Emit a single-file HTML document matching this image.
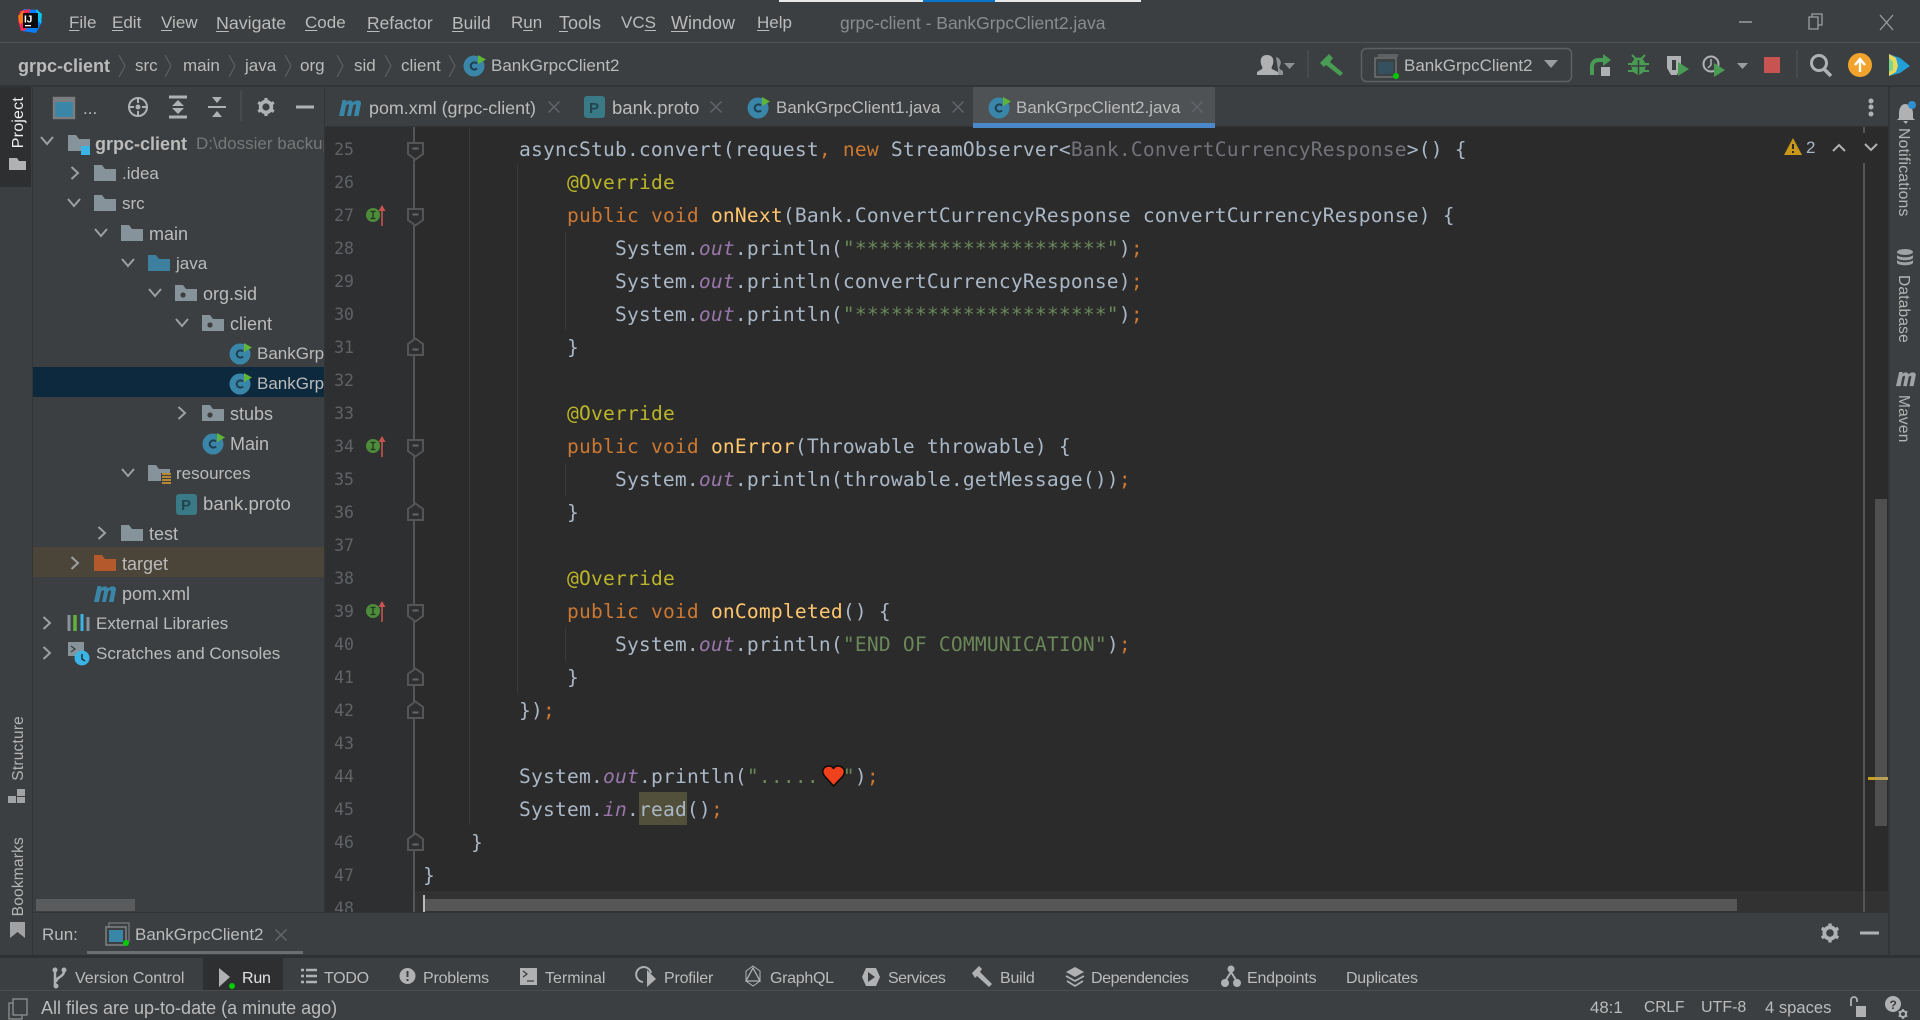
<!DOCTYPE html>
<html><head><meta charset="utf-8"><title>grpc-client - BankGrpcClient2.java</title>
<style>
html,body{margin:0;padding:0;background:#3c3f41;width:1920px;height:1020px;overflow:hidden}
body{position:relative;font-family:"Liberation Sans",sans-serif;color:#bbb}
.r{position:absolute}
.t{position:absolute;white-space:nowrap;font-size:17px;line-height:20px;height:20px;color:#bbb}
.s{font-size:16px}
.vl{position:absolute;writing-mode:vertical-rl;white-space:nowrap;font-size:15.5px;line-height:18px;color:#b4b4b4;letter-spacing:.2px}
.vr{transform:rotate(180deg)}
u{text-underline-offset:2px}
#code{position:absolute;left:325px;top:127px;width:1563px;height:785px;overflow:hidden}
.l{position:absolute;left:98px;white-space:pre;font-family:"DejaVu Sans Mono","Liberation Mono",monospace;font-size:19.6px;line-height:33px;height:33px;color:#a9b7c6;letter-spacing:.2px}
.n{position:absolute;left:0;width:29px;text-align:right;font-family:"DejaVu Sans Mono",monospace;font-size:16.5px;line-height:33px;color:#606366}
.k{color:#cc7832}.m{color:#ffc66d}.a{color:#bbb529}.q{color:#6a8759}.f{color:#9876aa;font-style:italic}.d{color:#72737a}
#tree{position:absolute;left:33px;top:127px;width:291px;height:700px;overflow:hidden}
#tree .t{margin-left:-33px;margin-top:-127px}
svg{position:absolute;left:0;top:0}
</style></head><body>

<!-- backgrounds -->
<div class="r" style="left:779px;top:0;width:362px;height:2px;background:#e8e8e8"></div>
<div class="r" style="left:923px;top:0;width:72px;height:2px;background:#0a74c9"></div>
<div class="r" style="left:0;top:42px;width:1920px;height:1px;background:#515456"></div>
<div class="r" style="left:0;top:85px;width:1920px;height:2px;background:#323435"></div>
<div class="r" style="left:0;top:87px;width:31px;height:100px;background:#2d2f30"></div>
<div class="r" style="left:32px;top:87px;width:1px;height:868px;background:#323435"></div>
<div class="r" style="left:324px;top:87px;width:1px;height:826px;background:#323435"></div>
<div class="r" style="left:1888px;top:87px;width:2px;height:868px;background:#323435"></div>
<div class="r" style="left:325px;top:126px;width:1563px;height:786px;background:#2b2b2b"></div>
<div class="r" style="left:325px;top:126px;width:89px;height:786px;background:#2e2f31"></div>
<div class="r" style="left:325px;top:126px;width:1563px;height:1px;background:#323435"></div>
<div class="r" style="left:973px;top:87px;width:242px;height:39px;background:#4e5254"></div>
<div class="r" style="left:973px;top:123px;width:242px;height:5px;background:#4a88c7"></div>
<div class="r" style="left:33px;top:367px;width:291px;height:30px;background:#0d293e"></div>
<div class="r" style="left:33px;top:547px;width:291px;height:30px;background:#4b4539"></div>
<div class="r" style="left:36px;top:899px;width:99px;height:12px;background:#595b5d"></div>
<div class="r" style="left:414px;top:891px;width:1474px;height:21px;background:#323232"></div>
<div class="r" style="left:33px;top:912px;width:1855px;height:1px;background:#323435"></div>
<div class="r" style="left:87px;top:951px;width:216px;height:3px;background:#6b6f72"></div>
<div class="r" style="left:0;top:955px;width:1920px;height:3px;background:#2f3132"></div>
<div class="r" style="left:203px;top:958px;width:80px;height:32px;background:#2d2f30"></div>
<div class="r" style="left:0;top:990px;width:1920px;height:1px;background:#4a4c4e"></div>
<!-- guides -->
<div class="r" style="left:469px;top:128px;width:1px;height:697px;background:#3b3b3b"></div>
<div class="r" style="left:517px;top:165px;width:1px;height:528px;background:#3b3b3b"></div>
<div class="r" style="left:565px;top:232px;width:1px;height:98px;background:#3b3b3b"></div>
<div class="r" style="left:565px;top:463px;width:1px;height:33px;background:#3b3b3b"></div>
<div class="r" style="left:565px;top:628px;width:1px;height:33px;background:#3b3b3b"></div>
<div class="r" style="left:1863px;top:127px;width:2px;height:6px;background:#555"></div>
<div class="r" style="left:1863px;top:163px;width:2px;height:749px;background:#555"></div>
<div class="r" style="left:639px;top:792px;width:48px;height:33px;background:#52503a"></div>

<!-- menu -->
<div class="t" style="left:69px;top:13px"><u>F</u>ile</div>
<div class="t" style="left:112px;top:13px"><u>E</u>dit</div>
<div class="t" style="left:161px;top:13px"><u>V</u>iew</div>
<div class="t" style="left:216px;top:13px;font-size:17.8px"><u>N</u>avigate</div>
<div class="t" style="left:305px;top:13px"><u>C</u>ode</div>
<div class="t" style="left:367px;top:13px;font-size:17.4px"><u>R</u>efactor</div>
<div class="t" style="left:452px;top:13px;font-size:17.4px"><u>B</u>uild</div>
<div class="t" style="left:511px;top:13px">R<u>u</u>n</div>
<div class="t" style="left:559px;top:13px;font-size:18px"><u>T</u>ools</div>
<div class="t" style="left:621px;top:13px">VC<u>S</u></div>
<div class="t" style="left:671px;top:13px;font-size:18px"><u>W</u>indow</div>
<div class="t" style="left:757px;top:13px"><u>H</u>elp</div>
<div class="t" style="left:840px;top:13px;color:#8a8c8e;font-size:17.5px">grpc-client - BankGrpcClient2.java</div>

<!-- breadcrumb -->
<div class="t" style="left:18px;top:56px;font-weight:bold;font-size:18px">grpc-client</div>
<div class="t" style="left:135px;top:56px">src</div>
<div class="t" style="left:183px;top:56px">main</div>
<div class="t" style="left:245px;top:56px">java</div>
<div class="t" style="left:300px;top:56px">org</div>
<div class="t" style="left:354px;top:56px">sid</div>
<div class="t" style="left:401px;top:56px">client</div>
<div class="t" style="left:491px;top:56px">BankGrpcClient2</div>
<div class="t" style="left:1404px;top:56px">BankGrpcClient2</div>

<!-- tabs -->
<div class="t" style="left:83px;top:99px">...</div>
<div class="t" style="left:369px;top:98px;font-size:17.9px">pom.xml (grpc-client)</div>
<div class="t" style="left:612px;top:98px;font-size:18.5px">bank.proto</div>
<div class="t" style="left:776px;top:98px">BankGrpcClient1.java</div>
<div class="t" style="left:1016px;top:98px">BankGrpcClient2.java</div>

<!-- tree -->
<div id="tree">
<div class="t" style="left:95px;top:134px;font-weight:bold;font-size:18px">grpc-client</div>
<div class="t" style="left:196px;top:134px;color:#777">D:\dossier backup\grpc</div>
<div class="t" style="left:122px;top:164px">.idea</div>
<div class="t" style="left:122px;top:194px">src</div>
<div class="t" style="left:149px;top:224px;font-size:18px">main</div>
<div class="t" style="left:176px;top:254px">java</div>
<div class="t" style="left:203px;top:284px;font-size:18px">org.sid</div>
<div class="t" style="left:230px;top:314px;font-size:18px">client</div>
<div class="t" style="left:257px;top:344px">BankGrpcClient1</div>
<div class="t" style="left:257px;top:374px">BankGrpcClient2</div>
<div class="t" style="left:230px;top:404px;font-size:18px">stubs</div>
<div class="t" style="left:230px;top:434px;font-size:18px">Main</div>
<div class="t" style="left:176px;top:464px">resources</div>
<div class="t" style="left:203px;top:494px;font-size:18.6px">bank.proto</div>
<div class="t" style="left:149px;top:524px;font-size:18px">test</div>
<div class="t" style="left:122px;top:554px;font-size:18px">target</div>
<div class="t" style="left:122px;top:584px;font-size:18px">pom.xml</div>
<div class="t" style="left:96px;top:614px">External Libraries</div>
<div class="t" style="left:96px;top:644px">Scratches and Consoles</div>
</div>

<!-- code -->
<div id="code">
<div class="n" style="top:6px">25</div><div class="n" style="top:39px">26</div><div class="n" style="top:72px">27</div><div class="n" style="top:105px">28</div><div class="n" style="top:138px">29</div><div class="n" style="top:171px">30</div><div class="n" style="top:204px">31</div><div class="n" style="top:237px">32</div><div class="n" style="top:270px">33</div><div class="n" style="top:303px">34</div><div class="n" style="top:336px">35</div><div class="n" style="top:369px">36</div><div class="n" style="top:402px">37</div><div class="n" style="top:435px">38</div><div class="n" style="top:468px">39</div><div class="n" style="top:501px">40</div><div class="n" style="top:534px">41</div><div class="n" style="top:567px">42</div><div class="n" style="top:600px">43</div><div class="n" style="top:633px">44</div><div class="n" style="top:666px">45</div><div class="n" style="top:699px">46</div><div class="n" style="top:732px">47</div><div class="n" style="top:765px">48</div>
<div class="l" style="top:6px">        asyncStub.convert(request<span class="k">,</span> <span class="k">new</span> StreamObserver&lt;<span class="d">Bank.ConvertCurrencyResponse</span>&gt;() {</div>
<div class="l" style="top:39px">            <span class="a">@Override</span></div>
<div class="l" style="top:72px">            <span class="k">public void</span> <span class="m">onNext</span>(Bank.ConvertCurrencyResponse convertCurrencyResponse) {</div>
<div class="l" style="top:105px">                System.<span class="f">out</span>.println(<span class="q">"*********************"</span>)<span class="k">;</span></div>
<div class="l" style="top:138px">                System.<span class="f">out</span>.println(convertCurrencyResponse)<span class="k">;</span></div>
<div class="l" style="top:171px">                System.<span class="f">out</span>.println(<span class="q">"*********************"</span>)<span class="k">;</span></div>
<div class="l" style="top:204px">            }</div>
<div class="l" style="top:270px">            <span class="a">@Override</span></div>
<div class="l" style="top:303px">            <span class="k">public void</span> <span class="m">onError</span>(Throwable throwable) {</div>
<div class="l" style="top:336px">                System.<span class="f">out</span>.println(throwable.getMessage())<span class="k">;</span></div>
<div class="l" style="top:369px">            }</div>
<div class="l" style="top:435px">            <span class="a">@Override</span></div>
<div class="l" style="top:468px">            <span class="k">public void</span> <span class="m">onCompleted</span>() {</div>
<div class="l" style="top:501px">                System.<span class="f">out</span>.println(<span class="q">"END OF COMMUNICATION"</span>)<span class="k">;</span></div>
<div class="l" style="top:534px">            }</div>
<div class="l" style="top:567px">        })<span class="k">;</span></div>
<div class="l" style="top:633px">        System.<span class="f">out</span>.println(<span class="q">"..... &nbsp;"</span>)<span class="k">;</span></div>
<div class="l" style="top:666px">        System.<span class="f">in</span>.read()<span class="k">;</span></div>
<div class="l" style="top:699px">    }</div>
<div class="l" style="top:732px">}</div>
</div>

<!-- editor scrollbars -->
<div class="r" style="left:424px;top:899px;width:1313px;height:12px;background:#565656"></div>
<div class="r" style="left:423px;top:895px;width:2px;height:17px;background:#bbb"></div>
<div class="r" style="left:1875px;top:499px;width:12px;height:327px;background:#4f4f4f"></div>
<div class="r" style="left:1868px;top:777px;width:7px;height:3px;background:#c9a020"></div>
<div class="r" style="left:1875px;top:777px;width:13px;height:3px;background:#b8a055"></div>

<div class="t" style="left:1806px;top:138px;color:#a9b7c6">2</div>

<!-- run bar -->
<div class="t" style="left:42px;top:925px">Run:</div>
<div class="t" style="left:135px;top:925px">BankGrpcClient2</div>

<!-- bottom tool bar -->
<div class="t s" style="left:75px;top:969px">Version Control</div>
<div class="t s" style="left:242px;top:969px;color:#e4e4e4;letter-spacing:-.2px">Run</div>
<div class="t s" style="left:324px;top:969px;letter-spacing:-.3px">TODO</div>
<div class="t s" style="left:423px;top:969px;letter-spacing:-.2px">Problems</div>
<div class="t s" style="left:545px;top:969px">Terminal</div>
<div class="t s" style="left:664px;top:969px;letter-spacing:-.2px">Profiler</div>
<div class="t s" style="left:770px;top:969px;letter-spacing:-.3px">GraphQL</div>
<div class="t s" style="left:888px;top:969px;letter-spacing:-.5px">Services</div>
<div class="t s" style="left:1000px;top:969px;letter-spacing:-.2px">Build</div>
<div class="t s" style="left:1091px;top:969px;letter-spacing:-.4px">Dependencies</div>
<div class="t s" style="left:1247px;top:969px;letter-spacing:-.2px">Endpoints</div>
<div class="t s" style="left:1346px;top:969px;letter-spacing:-.3px">Duplicates</div>

<!-- status -->
<div class="t s" style="left:41px;top:998px;font-size:18px">All files are up-to-date (a minute ago)</div>
<div class="t s" style="left:1590px;top:998px;font-size:16.8px">48:1</div>
<div class="t s" style="left:1644px;top:998px;font-size:15.5px">CRLF</div>
<div class="t s" style="left:1701px;top:998px">UTF-8</div>
<div class="t s" style="left:1765px;top:998px;font-size:16.6px">4 spaces</div>

<!-- vertical labels -->
<div class="vl vr" style="left:10px;top:97px;color:#f0f0f0;font-size:16px">Project</div>
<div class="vl vr" style="left:10px;top:716px">Structure</div>
<div class="vl vr" style="left:10px;top:837px">Bookmarks</div>
<div class="vl" style="left:1894px;top:128px;font-size:15.8px">Notifications</div>
<div class="vl" style="left:1894px;top:275px">Database</div>
<div class="vl" style="left:1894px;top:395px">Maven</div>

<!-- icons -->
<svg width="1920" height="1020" viewBox="0 0 1920 1020" fill="none">
<defs>
<g id="fo"><path d="M0 0H8L11 4H22V16H0Z" fill="#87939a"/></g>
<g id="pk"><path d="M0 0H8L11 4H22V16H0Z" fill="#87939a"/><circle cx="8" cy="10" r="2.600" fill="#3c3f41"/></g>
<g id="cl"><circle r="10.500" fill="#3a86a8"/><path d="M3 -2.400A3.600 3.600 0 1 0 3 2.400" stroke="#1f3f50" stroke-width="2"/><path d="M4 -11L12 -6.500L4 -2Z" fill="#5fb636"/></g>
<path id="cd" d="M-6 -4L0 3L6 -4" stroke="#9da0a2" stroke-width="2"/>
<path id="cr" d="M-3.500 -6L3 0L-3.500 6" stroke="#9da0a2" stroke-width="2"/>
<g id="x"><path d="M-5.500 -5.500L5.500 5.500M5.500 -5.500L-5.500 5.500" stroke="#62656a" stroke-width="1.500"/></g>
<g id="fd"><path d="M-7.500 -7H7.500V4L0 9.500L-7.500 4Z" fill="#2e2f31" stroke="#555" stroke-width="2"/><path d="M-3 -1.500H3" stroke="#666" stroke-width="2"/></g>
<g id="fu"><path d="M-7.500 7H7.500V-4L0 -9.500L-7.500 -4Z" fill="#2e2f31" stroke="#555" stroke-width="2"/><path d="M-3 1.500H3" stroke="#666" stroke-width="2"/></g>
<g id="im"><circle r="7" fill="#4c8c3a"/><path d="M-2.500 -3.500H2.500M0 -3.500V3.500M-2.500 3.500H2.500" stroke="#23351e" stroke-width="1.300"/><path d="M9 11V-9" stroke="#c75450" stroke-width="1.600"/><path d="M5.500 -4L9 -10L12.500 -4Z" fill="#c75450"/></g>
<g id="gear"><circle r="6" stroke="#afb1b3" stroke-width="4"/><path d="M0 -10V-6M0 10V6M-8.700 -5L-5 -3M8.700 5L5 3M-8.700 5L-5 3M8.700 -5L5 -3" stroke="#afb1b3" stroke-width="3.600"/></g>
<path id="mvn" d="M0 16L3.500 0H7.500L7 2.500C9 0 12.500 -.5 14 2.500C16 0 22 -1 22 3.500L19.500 16H15L17 5.500C17.200 3.500 15 4 14 6L12 16H8L10 5.500C10.200 3.500 8 4 7 6L5 16Z"/>
</defs>

<!-- logo -->
<path d="M24 9L38 10L42 22L36 33L22 31L18 20Z" fill="#087cfa"/>
<path d="M20 11L30 9L26 30L21 31L18 20Z" fill="#fe2857"/>
<path d="M18 16L24 10L24 22L20 24Z" fill="#f97a12"/>
<path d="M36 9L42 14L41 24L37 20Z" fill="#07c3f2"/>
<rect x="23" y="13" width="15" height="15" fill="#0c0c10"/>
<text x="24" y="22.500" font-family="Liberation Sans" font-size="10" font-weight="bold" fill="#fff">IJ</text>
<rect x="25" y="25" width="6" height="1.300" fill="#fff"/>

<!-- window buttons -->
<path d="M1739 22H1752" stroke="#9b9d9f" stroke-width="1.500"/>
<path d="M1809 17H1818V29H1809ZM1812 17V14H1822V25H1818" stroke="#9b9d9f" stroke-width="1.300"/>
<path d="M1880 15L1893 30M1893 15L1880 30" stroke="#9b9d9f" stroke-width="1.300"/>

<!-- breadcrumb chevrons -->
<g stroke="#5d6062" stroke-width="1.200">
<path d="M119 55L125 66L119 77M165 55L171 66L165 77M229 55L235 66L229 77M285 55L291 66L285 77M337 55L343 66L337 77M385 55L391 66L385 77M449 55L455 66L449 77"/>
</g>
<use href="#cl" x="474" y="66"/>

<!-- toolbar -->
<path d="M1276 57C1280 58 1282 62 1280 66C1279 68 1279 69 1283 71V75H1278V70Z" fill="#8e9092"/>
<path d="M1267 55C1273 55 1274 60 1273 64C1272 67 1271 67 1272 69L1278 72V75H1257V72L1262 69C1263 67 1262 67 1261 64C1260 60 1261 55 1267 55Z" fill="#afb1b3"/>
<path d="M1284 63H1295L1289.500 69Z" fill="#8e9092"/>
<path d="M1308 50V78M1797 50V78" stroke="#515456" stroke-width="1"/>
<path d="M1320 63L1329 54L1333 58L1330 62L1343 73L1340 76L1326 65L1324 67Z" fill="#499c54"/>
<rect x="1361.500" y="48.500" width="210" height="33" rx="5" stroke="#5e6163" stroke-width="1.500"/>
<rect x="1378" y="54" width="20" height="3" fill="#5e6163"/>
<rect x="1375" y="58" width="21" height="19" fill="#3c4244" stroke="#6e7173" stroke-width="1.500"/>
<rect x="1378" y="62" width="15" height="12" fill="#35505f"/>
<circle cx="1396" cy="76" r="3" fill="#0c0"/>
<path d="M1544 60H1558L1551 68Z" fill="#9a9c9e"/>
<!-- rerun -->
<path d="M1605 60H1599C1594 60 1592 63 1592 67V75" stroke="#499c54" stroke-width="4"/>
<path d="M1603 54L1611 60L1603 66Z" fill="#499c54"/>
<rect x="1601" y="67" width="9" height="9" fill="#afb1b3"/>
<!-- bug -->
<ellipse cx="1638.500" cy="66" rx="7" ry="8.500" fill="#499c54"/>
<path d="M1632 55L1636 59M1645 55L1641 59M1628 64H1649M1628 71H1649" stroke="#499c54" stroke-width="2"/>
<path d="M1632 66H1645M1638.500 60V74" stroke="#3c3f41" stroke-width="1.500"/>
<!-- coverage -->
<path d="M1667 56H1681V66L1677 75H1671L1667 68Z" fill="#afb1b3"/>
<path d="M1672 60H1676V70H1672Z" fill="#3c3f41"/>
<path d="M1678 62L1689 69L1678 76Z" fill="#499c54"/>
<!-- profiler -->
<circle cx="1711" cy="64" r="7.500" stroke="#afb1b3" stroke-width="2"/>
<path d="M1711 59V65L1708 68" stroke="#afb1b3" stroke-width="1.500"/>
<path d="M1714 63L1725 70L1714 77Z" fill="#499c54"/>
<path d="M1737 63H1748L1742.500 69Z" fill="#9a9c9e"/>
<rect x="1764" y="57" width="16" height="16" fill="#c75450"/>
<circle cx="1819" cy="63" r="7.500" stroke="#afb1b3" stroke-width="3"/>
<path d="M1824 69L1831 76" stroke="#afb1b3" stroke-width="3.500"/>
<circle cx="1860" cy="65" r="12" fill="#f2a32b"/>
<path d="M1860 72V60M1855 65L1860 59L1865 65" stroke="#fff" stroke-width="2.400"/>
<path d="M1889 54L1900 58L1910 66L1900 73L1889 76Z" fill="#21a0d8"/>
<path d="M1889 54L1896 58L1898 66L1896 72L1889 76Z" fill="#e8d95a"/>
<path d="M1889 58L1893 62L1893 70L1889 72Z" fill="#7cd38a"/>

<!-- project header icons -->
<rect x="54" y="98" width="20" height="20" fill="#3a86a8" stroke="#7a7e81" stroke-width="2.400"/>
<rect x="53" y="98" width="22" height="4" fill="#7a7e81"/>
<circle cx="138" cy="107" r="9" stroke="#afb1b3" stroke-width="2"/><circle cx="138" cy="107" r="2.500" fill="#afb1b3"/>
<path d="M138 97V103M138 111V117M128 107H134M142 107H148" stroke="#afb1b3" stroke-width="2"/>
<path d="M169 97H187M169 117H187" stroke="#afb1b3" stroke-width="3"/>
<path d="M172 106L178 100L184 106ZM172 108L178 114L184 108Z" fill="#afb1b3"/>
<path d="M208 107H226" stroke="#afb1b3" stroke-width="2"/>
<path d="M212 97H222L217 103ZM212 117H222L217 111Z" fill="#afb1b3"/>
<path d="M241 91V121" stroke="#515456"/>
<use href="#gear" x="266" y="107" transform="translate(266 107) scale(.9) translate(-266 -107)"/>
<path d="M296 107H314" stroke="#afb1b3" stroke-width="3"/>

<!-- tabs icons -->
<use href="#mvn" x="339" y="100" fill="#3a86a8"/>
<use href="#x" x="554" y="107"/>
<rect x="584" y="96" width="21" height="22" rx="3" fill="#3a7a86"/>
<text x="589" y="113" font-family="Liberation Sans" font-size="15" font-weight="bold" fill="#21444e">P</text>
<use href="#x" x="716" y="107"/>
<use href="#cl" x="758" y="108"/>
<use href="#x" x="958" y="107"/>
<use href="#cl" x="999" y="108"/>
<use href="#x" x="1197" y="107"/>
<circle cx="1871" cy="101" r="2.500" fill="#afb1b3"/><circle cx="1871" cy="107" r="2.500" fill="#afb1b3"/><circle cx="1871" cy="114" r="2.500" fill="#afb1b3"/>

<!-- left strip -->
<path d="M9 158H17L19 161H26V170H9Z" fill="#afb1b3"/>
<path d="M17 789H25V796H17ZM8 796H16V803H8ZM17 797H25V803H17Z" fill="#a0a2a4"/>
<path d="M10 922H25V938L17.500 932L10 938Z" fill="#a0a2a4"/>

<!-- right strip -->
<path d="M1905 104C1910 104 1913 109 1913 113V118L1915 120H1897L1899 118V113C1899 109 1901 104 1905 104ZM1903 121H1908L1906 124Z" fill="#afb1b3"/>
<circle cx="1912" cy="105" r="4" fill="#2f8fd0"/>
<ellipse cx="1905" cy="252" rx="8" ry="3" fill="#a0a2a4"/>
<path d="M1897 255C1899 258 1911 258 1913 255V258C1911 261 1899 261 1897 258ZM1897 260C1899 263 1911 263 1913 260V263C1911 266 1899 266 1897 263Z" fill="#a0a2a4"/>
<use href="#mvn" x="1896" y="372" fill="#a0a2a4" transform="translate(1896 372) scale(.9 .88) translate(-1896 -372)"/>

<!-- tree icons -->
<use href="#cd" x="47" y="141"/>
<use href="#fo" x="68" y="135"/><rect x="81" y="146" width="9" height="9" fill="#3ab4e4"/>
<use href="#cr" x="75" y="173"/><use href="#fo" x="94" y="165"/>
<use href="#cd" x="74" y="203"/><use href="#fo" x="94" y="195"/>
<use href="#cd" x="101" y="233"/><use href="#fo" x="121" y="225"/>
<use href="#cd" x="128" y="263"/><path d="M148 255H156L159 259H170V271H148Z" fill="#3d7f9f"/>
<use href="#cd" x="155" y="293"/><use href="#pk" x="175" y="285"/>
<use href="#cd" x="182" y="323"/><use href="#pk" x="202" y="315"/>
<use href="#cl" x="240" y="354"/>
<use href="#cl" x="240" y="384"/>
<use href="#cr" x="182" y="413"/><use href="#pk" x="202" y="405"/>
<use href="#cl" x="213" y="444"/>
<use href="#cd" x="128" y="473"/><use href="#fo" x="148" y="465"/>
<rect x="161" y="473" width="11" height="12" fill="#3c3f41"/>
<path d="M162 474H171M162 477H171M162 480H171M162 483H171" stroke="#e0a030" stroke-width="1.500"/>
<rect x="176" y="494" width="21" height="21" rx="3" fill="#3a7a86"/>
<text x="181" y="510" font-family="Liberation Sans" font-size="15" font-weight="bold" fill="#21444e">P</text>
<use href="#cr" x="102" y="533"/><use href="#fo" x="121" y="525"/>
<use href="#cr" x="75" y="563"/><path d="M94 555H102L105 559H116V571H94Z" fill="#b4592b"/>
<use href="#mvn" x="94" y="586" fill="#3a86a8"/>
<use href="#cr" x="47" y="623"/>
<path d="M69 615V631M88 617V631" stroke="#87939a" stroke-width="3"/>
<path d="M75 615V631" stroke="#60b33a" stroke-width="3.500"/>
<path d="M82 614V631" stroke="#3ab4e4" stroke-width="3"/>
<use href="#cr" x="47" y="653"/>
<rect x="68" y="642" width="16" height="14" fill="#87939a"/>
<path d="M71 646L75 649L71 652" stroke="#3c3f41" stroke-width="1.300"/>
<circle cx="82" cy="658" r="7.500" fill="#3ab4e4"/>
<path d="M82 654V659L85 661" stroke="#23343c" stroke-width="1.500"/>

<!-- gutter -->
<path d="M414 127V912" stroke="#555" stroke-width="2"/>
<use href="#fd" x="415.500" y="150"/>
<use href="#fd" x="415.500" y="216"/>
<use href="#fu" x="415.500" y="348"/>
<use href="#fd" x="415.500" y="447"/>
<use href="#fu" x="415.500" y="513"/>
<use href="#fd" x="415.500" y="612"/>
<use href="#fu" x="415.500" y="678"/>
<use href="#fu" x="415.500" y="711"/>
<use href="#fu" x="415.500" y="843"/>
<use href="#im" x="373" y="215"/>
<use href="#im" x="373" y="446"/>
<use href="#im" x="373" y="611"/>

<!-- heart -->
<path d="M833.500 786L824.500 776C820 770 825 766 829 766C831 766 833 767 833.500 769C834 767 836 766 838 766C842 766 847 770 843 776Z" fill="#f0401c" stroke="#0a0a0a" stroke-width="1.500"/>

<!-- warning -->
<path d="M1793 138L1802 155H1784Z" fill="#c9981a"/>
<path d="M1793 144V149M1793 151V153" stroke="#2b2b2b" stroke-width="2"/>
<path d="M1833 151L1839 145L1845 151M1865 144L1871 150L1877 144" stroke="#afb1b3" stroke-width="2"/>

<!-- run bar icons -->
<rect x="109" y="923" width="20" height="18" fill="#3c3f41" stroke="#6e7173" stroke-width="1.500"/>
<rect x="106" y="927" width="20" height="18" fill="#3c3f41" stroke="#7f8385" stroke-width="1.500"/>
<rect x="109" y="930" width="14" height="12" fill="#3a86a8"/>
<circle cx="126" cy="943" r="3" fill="#0c0"/>
<use href="#x" x="281" y="935"/>
<use href="#gear" x="1830" y="933" transform="translate(1830 933) scale(.95) translate(-1830 -933)"/>
<path d="M1860 933H1879" stroke="#afb1b3" stroke-width="3"/>

<!-- bottom icons -->
<circle cx="55" cy="970" r="2.500" fill="#afb1b3"/><circle cx="64" cy="970" r="2.500" fill="#afb1b3"/><circle cx="56" cy="986" r="2.500" fill="#afb1b3"/>
<path d="M55 970V986M64 971C64 977 56 977 56 982" stroke="#afb1b3" stroke-width="2.500"/>
<path d="M219 968L230 977L219 987Z" fill="#afb1b3"/><circle cx="232" cy="986" r="3" fill="#0c0"/>
<path d="M301 970H304M301 976H304M301 982H304M306 970H317M306 976H317M306 982H317" stroke="#afb1b3" stroke-width="2.500"/>
<circle cx="407.500" cy="976" r="8" fill="#afb1b3"/><path d="M407.500 971V977M407.500 979V981" stroke="#3c3f41" stroke-width="2"/>
<rect x="520" y="968" width="17" height="17" fill="#afb1b3"/><path d="M523 971L527 974L523 977M527 981H534" stroke="#3c3f41" stroke-width="1.300"/>
<path d="M651 973A7.500 7.500 0 1 0 643 982" stroke="#afb1b3" stroke-width="2"/>
<path d="M647 970L656 979L647 987Z" fill="#afb1b3"/>
<path d="M753 968L760 981H746Z" stroke="#afb1b3" stroke-width="1.300"/>
<path d="M753 966L760 971V981L753 986L746 981V971Z" stroke="#afb1b3" stroke-width="1"/>
<path d="M866 968H876L880 977L876 986H866L862 977Z" fill="#afb1b3"/><path d="M868 972L875 977L868 982Z" fill="#3c3f41"/>
<path d="M972 973L979 966L982 969L980 972L992 984L989 987L977 976L975 978Z" fill="#afb1b3"/>
<path d="M1075 967L1084 972L1075 977L1066 972Z" fill="#afb1b3"/>
<path d="M1066 976L1075 981L1084 976M1067 981L1075 986L1083 981" stroke="#afb1b3" stroke-width="1.800"/>
<circle cx="1231" cy="969" r="3.500" fill="#afb1b3"/>
<circle cx="1225" cy="983" r="4" fill="#afb1b3"/><circle cx="1237" cy="983" r="4" fill="#afb1b3"/>
<path d="M1231 972L1226 980M1231 972L1236 980" stroke="#afb1b3" stroke-width="2"/>

<!-- status icons -->
<rect x="13" y="999" width="14" height="16" stroke="#8e9092" stroke-width="1.300"/>
<path d="M13 1003H9V1019H22V1015" stroke="#8e9092" stroke-width="1.300"/>
<path d="M1851 1006V1000C1851 996 1857 996 1857 1000V1002" stroke="#afb1b3" stroke-width="1.800"/>
<rect x="1856" y="1006" width="10" height="11" fill="#afb1b3"/>
<circle cx="1893" cy="1004" r="8" fill="#afb1b3"/>
<text x="1889.500" y="1009" font-family="Liberation Sans" font-size="12" font-weight="bold" fill="#3c3f41">?</text>
<use href="#gear" x="1903" y="1014" transform="translate(1903 1014) scale(.5) translate(-1903 -1014)"/>
</svg>
</body></html>
